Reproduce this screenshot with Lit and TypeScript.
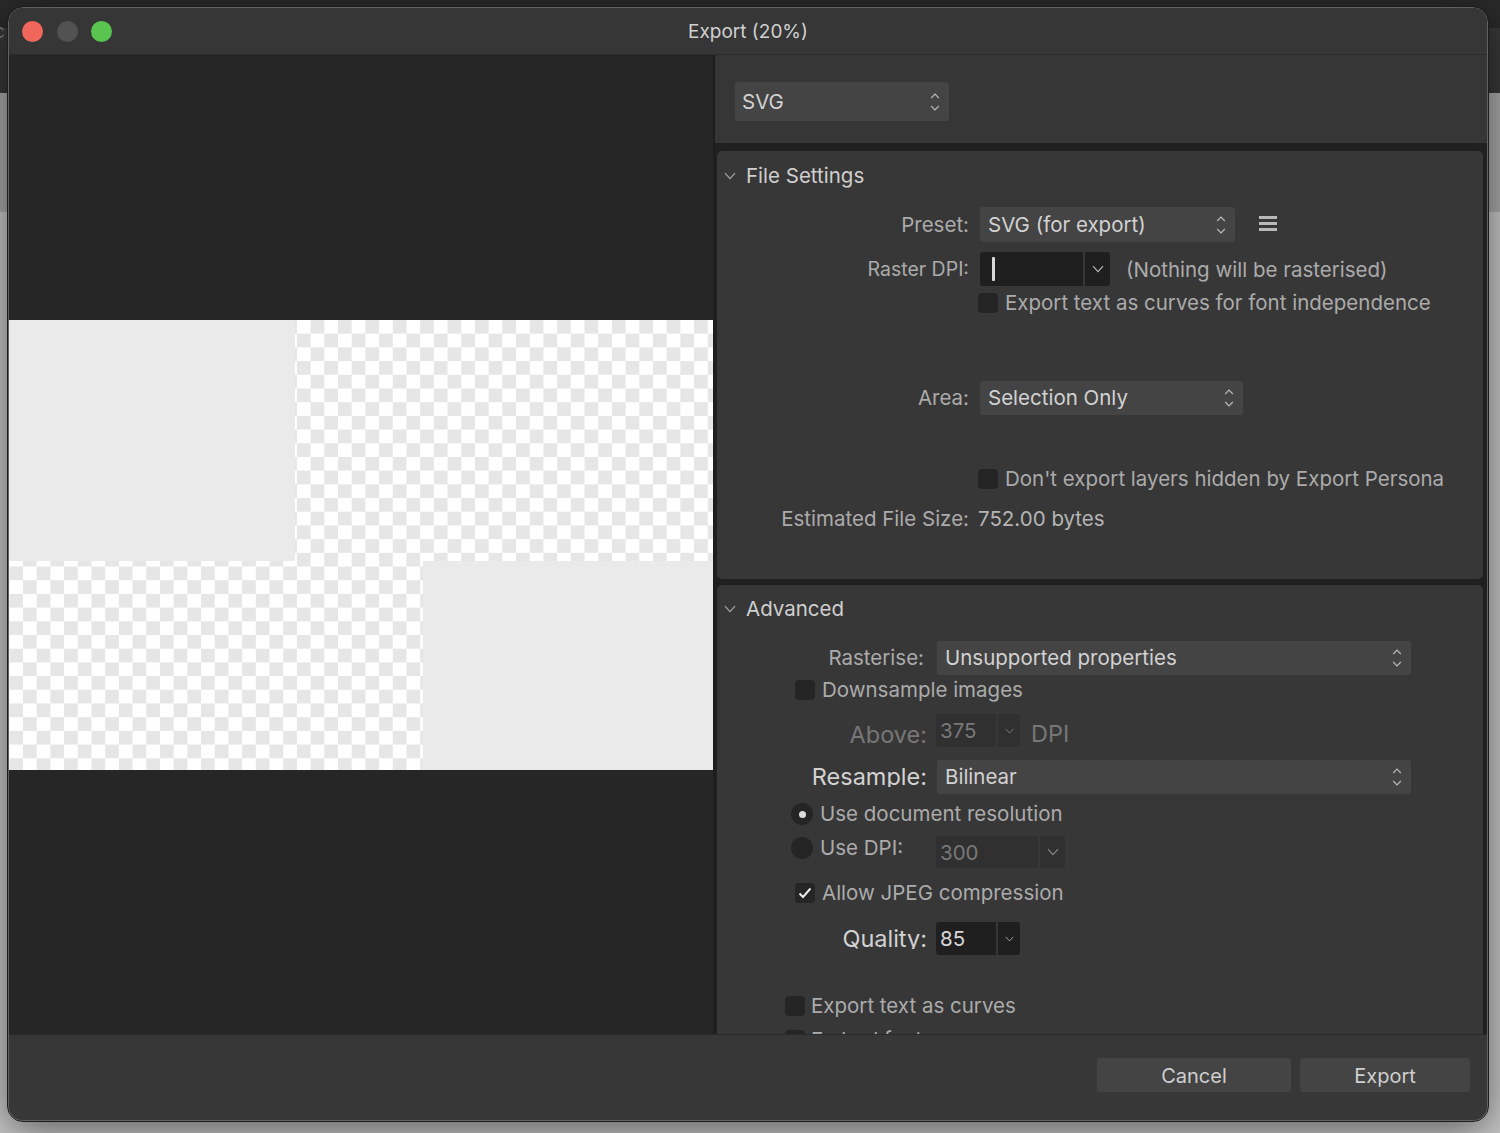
import { LitElement, html, css, svg } from "lit";
import { customElement } from "lit/decorators.js";

const chevron = (cls: string) => html`<svg class=${cls} viewBox="0 0 12 8" fill="none" stroke="currentColor" stroke-width="1.1"><path d="M1 1.2 6 6.6 11 1.2"/></svg>`;
const stepper = html`<svg class="stepper" viewBox="0 0 10 20" fill="none" stroke="currentColor" stroke-width="1.1"><path d="M1.2 6 5 2 8.8 6"/><path d="M1.2 14 5 18 8.8 14"/></svg>`;

@customElement("app-root")
export class AppRoot extends LitElement {
  static styles = css`
    :host {
      display: block;
      position: relative;
      width: 1500px;
      height: 1133px;
      overflow: hidden;
      font-family: Inter, "Liberation Sans", sans-serif;
      font-size: 20.5px;
      line-height: 24px;
      color: #ababab;
      background: linear-gradient(#a9a9a9 0 212px, #c6c6c6 212px);
    }
    .desk-bar { height: 93px; background: linear-gradient(#2a2a2a 0 28px, #383838 28px); color: #777; overflow: hidden; }
    .desk-text { display: block; margin: 20px 0 0 -6px; font-size: 19px; }
    .window {
      position: absolute; left: 8px; top: 7px; width: 1480px; height: 1114px;
      box-sizing: border-box; border: 1px solid #626262; border-radius: 15px; overflow: hidden;
      display: flex; flex-direction: column; background: #373737;
      outline: 1px solid #1d1d1d;
      box-shadow: 0 8px 40px rgba(0,0,0,.55);
    }
    .title {
      height: 47px; flex: none; box-sizing: border-box; position: relative;
      display: flex; align-items: center; justify-content: center;
      background: #363636; border-bottom: 1px solid #2c2c2c;
      color: #d0d0d0; font-size: 19px; padding-top: 1px;
    }
    .lights { position: absolute; left: 13px; top: 13px; display: flex; gap: 13.5px; }
    .light { width: 21px; height: 21px; border-radius: 50%; }
    .red { background: #f0665a; } .gray { background: #525252; } .green { background: #5ac451; }
    .body { flex: 1; display: flex; min-height: 0; }
    .preview { width: 704px; flex: none; display: flex; flex-direction: column; background: #262626; }
    .pad-top { height: 265px; flex: none; }
    .image {
      height: 450px; flex: none; display: flex; flex-direction: column;
      background: repeating-conic-gradient(#e6e6e6 0 25%, #fff 0 50%) 14px 0 / 27.4px 27.4px;
    }
    .image-row { display: flex; }
    .r1 { height: 241px; } .r2 { height: 209px; justify-content: flex-end; }
    .solid { background: #eaeaea; }
    .s1 { width: 286px; } .s2 { width: 290px; }
    .divider { width: 2px; flex: none; background: #1e1e1e; }
    .side { flex: 1; display: flex; flex-direction: column; background: #202020; min-width: 0; }
    .side-head { height: 88px; flex: none; box-sizing: border-box; background: #363636; padding: 27px 0 0 20px; }
    .sel {
      box-sizing: border-box; display: flex; align-items: center; justify-content: space-between;
      background: #444; border-radius: 3px; color: #d2d2d2; padding: 0 9px 0 8px; height: 34px;
    }
    .sel-format { width: 214px; height: 39px; padding-left: 7px; }
    .stepper { width: 10px; height: 20px; color: #bbb; }
    .panels { flex: 1; min-height: 0; display: flex; flex-direction: column; gap: 6px; padding: 8px 4px 0 2px; }
    .panel { background: #373737; border-radius: 5px 5px 0 0; display: flex; flex-direction: column; }
    .p1 { height: 428px; flex: none; border-radius: 5px; }
    .p2 { flex: 1; min-height: 0; overflow: hidden; }
    .head { display: flex; align-items: center; gap: 10px; padding-left: 7px; color: #cfcfcf; flex: none; }
    .h1 { height: 50px; } .h2 { height: 48px; }
    .head-chev { width: 12px; height: 8px; color: #aaa; }
    .row { display: flex; align-items: center; flex: none; }
    .label { text-align: right; flex: none; color: #ababab; }
    .l1 { width: 252px; margin-right: 11px; }
    .l1-small { font-size: 19.5px; }
    .l1-size { margin-right: 9px; }
    .l2 { width: 207px; margin-right: 13px; }
    .big { width: 210px; margin: 0 9px 2px 0; font-size: 23.5px; height: 22px; line-height: 24px; overflow: hidden; }
    .big-b { margin-right: 10px; }
    .low { margin: 6px 9px 0 0; }
    .dim { color: #777; }
    .bright { color: #d2d2d2; }
    .w-preset { width: 255px; height: 35px; } .w-area { width: 263px; } .w-wide { width: 474px; }
    .input { height: 100%; background: #1f1f1f; border-radius: 3px 0 0 3px; box-sizing: border-box; padding-left: 4px; display: flex; align-items: center; color: #d6d6d6; }
    .arrow { height: 100%; margin-left: 2px; background: #1f1f1f; border-radius: 0 3px 3px 0; display: flex; align-items: center; justify-content: center; color: #bbb; }
    .in-raster { width: 103px; padding-left: 12px; } .ar-raster { width: 25px; }
    .caret { width: 3px; height: 24px; background: #d8d8d8; border-radius: 1px; }
    .in-small { width: 60px; } .ar-small { width: 22px; }
    .in-mid { width: 102px; padding-top: 2px; } .ar-mid { width: 25px; }
    .off { background: #303030; color: #787878; }
    .arrow.off { color: #8a8a8a; }
    .arrow-icon { width: 12px; height: 8px; }
    .arrow-icon-s { width: 9px; height: 6px; }
    .note { margin: 2px 0 0 16px; }
    .unit { margin: 6px 0 0 11px; font-size: 23.5px; color: #777; }
    .menu { margin: 0 0 2px 24px; width: 18px; display: flex; flex-direction: column; gap: 3px; }
    .menu i { display: block; height: 3px; background: #b8b8b8; }
    .check { width: 20px; height: 20px; border-radius: 4px; background: #252525; flex: none; display: flex; align-items: center; justify-content: center; }
    .check svg { width: 14px; height: 12px; }
    .check-label { margin-left: 7px; white-space: nowrap; }
    .radio { width: 22px; height: 22px; border-radius: 50%; background: #252525; flex: none; display: flex; align-items: center; justify-content: center; }
    .radio i { width: 7px; height: 7px; border-radius: 50%; background: #ddd; }
    .radio-label { margin-left: 7px; white-space: nowrap; }
    .dpi-left { width: 145px; flex: none; display: flex; align-items: center; }
    .up { margin-top: -8px; }
    .value { color: #b4b4b4; }
    .footer {
      height: 86px; flex: none; box-sizing: border-box; background: #373737; border-top: 1px solid #2a2a2a;
      display: flex; justify-content: flex-end; gap: 9px; padding: 23px 17px 0 0; font-size: 20px;
    }
    .btn { height: 34px; box-sizing: border-box; padding-top: 1px; background: #444; border-radius: 3px; display: flex; align-items: center; justify-content: center; color: #cfcfcf; }
    .b-cancel { width: 194px; } .b-export { width: 170px; }

    .f-preset { margin-top: 6px; height: 35px; }
    .f-raster { margin-top: 10px; height: 34px; }
    .f-curves { margin-top: 6px; height: 22px; padding-left: 261px; }
    .f-area { margin-top: 67px; height: 34px; }
    .f-hidden { margin-top: 53px; height: 22px; padding-left: 261px; }
    .f-size { margin-top: 15px; height: 28px; }
    .a-raster { margin-top: 8px; height: 34px; }
    .a-down { margin-top: 4px; height: 22px; padding-left: 78px; }
    .a-above { margin-top: 13px; height: 33px; }
    .a-resample { margin-top: 13px; height: 33px; }
    .a-doc { margin-top: 10px; height: 22px; padding-left: 74px; }
    .a-dpi { margin-top: 11px; height: 32px; padding-left: 74px; align-items: center; }
    .a-jpeg { margin-top: 14px; height: 22px; padding-left: 78px; }
    .a-quality { margin-top: 18px; height: 33px; }
    .a-text { margin-top: 40px; height: 22px; padding-left: 68px; }
    .a-embed { margin-top: 12px; height: 22px; padding-left: 68px; }
    .a-text .check-label, .a-embed .check-label { margin-left: 6px; }
  `;

  private check(label: string, on = false) {
    return html`<div class="check">${on ? svg`<svg viewBox="0 0 14 12" fill="none" stroke="#eee" stroke-width="1.9"><path d="M1.5 6.5 5 10 12.5 1.5"/></svg>` : ""}</div><span class="check-label">${label}</span>`;
  }

  render() {
    return html`
      <div class="desk-bar"><span class="desk-text">c</span></div>
      <div class="window">
        <div class="title">
          <div class="lights"><div class="light red"></div><div class="light gray"></div><div class="light green"></div></div>
          Export (20%)
        </div>
        <div class="body">
          <div class="preview">
            <div class="pad-top"></div>
            <div class="image">
              <div class="image-row r1"><div class="solid s1"></div></div>
              <div class="image-row r2"><div class="solid s2"></div></div>
            </div>
          </div>
          <div class="divider"></div>
          <div class="side">
            <div class="side-head"><div class="sel sel-format"><span>SVG</span>${stepper}</div></div>
            <div class="panels">
              <section class="panel p1">
                <div class="head h1">${chevron("head-chev")}<span>File Settings</span></div>
                <div class="row f-preset">
                  <span class="label l1">Preset:</span>
                  <div class="sel w-preset"><span>SVG (for export)</span>${stepper}</div>
                  <div class="menu"><i></i><i></i><i></i></div>
                </div>
                <div class="row f-raster">
                  <span class="label l1 l1-small">Raster DPI:</span>
                  <div class="input in-raster"><div class="caret"></div></div>
                  <div class="arrow ar-raster">${chevron("arrow-icon")}</div>
                  <span class="note">(Nothing will be rasterised)</span>
                </div>
                <div class="row f-curves">${this.check("Export text as curves for font independence")}</div>
                <div class="row f-area">
                  <span class="label l1">Area:</span>
                  <div class="sel w-area"><span>Selection Only</span>${stepper}</div>
                </div>
                <div class="row f-hidden">${this.check("Don't export layers hidden by Export Persona")}</div>
                <div class="row f-size">
                  <span class="label l1 l1-size">Estimated File Size:</span>
                  <span class="value">752.00 bytes</span>
                </div>
              </section>
              <section class="panel p2">
                <div class="head h2">${chevron("head-chev")}<span>Advanced</span></div>
                <div class="row a-raster">
                  <span class="label l2">Rasterise:</span>
                  <div class="sel w-wide"><span>Unsupported properties</span>${stepper}</div>
                </div>
                <div class="row a-down">${this.check("Downsample images")}</div>
                <div class="row a-above">
                  <span class="label big dim low">Above:</span>
                  <div class="input in-small off">375</div>
                  <div class="arrow ar-small off">${chevron("arrow-icon-s")}</div>
                  <span class="unit">DPI</span>
                </div>
                <div class="row a-resample">
                  <span class="label big big-b bright">Resample:</span>
                  <div class="sel w-wide"><span>Bilinear</span>${stepper}</div>
                </div>
                <div class="row a-doc">
                  <div class="radio"><i></i></div><span class="radio-label">Use document resolution</span>
                </div>
                <div class="row a-dpi">
                  <div class="dpi-left up"><div class="radio"></div><span class="radio-label">Use DPI:</span></div>
                  <div class="input in-mid off">300</div>
                  <div class="arrow ar-mid off">${chevron("arrow-icon")}</div>
                </div>
                <div class="row a-jpeg">${this.check("Allow JPEG compression", true)}</div>
                <div class="row a-quality">
                  <span class="label big bright">Quality:</span>
                  <div class="input in-small">85</div>
                  <div class="arrow ar-small">${chevron("arrow-icon-s")}</div>
                </div>
                <div class="row a-text">${this.check("Export text as curves")}</div>
                <div class="row a-embed">${this.check("Embed fonts")}</div>
              </section>
            </div>
          </div>
        </div>
        <div class="footer">
          <div class="btn b-cancel">Cancel</div>
          <div class="btn b-export">Export</div>
        </div>
      </div>
    `;
  }
}
